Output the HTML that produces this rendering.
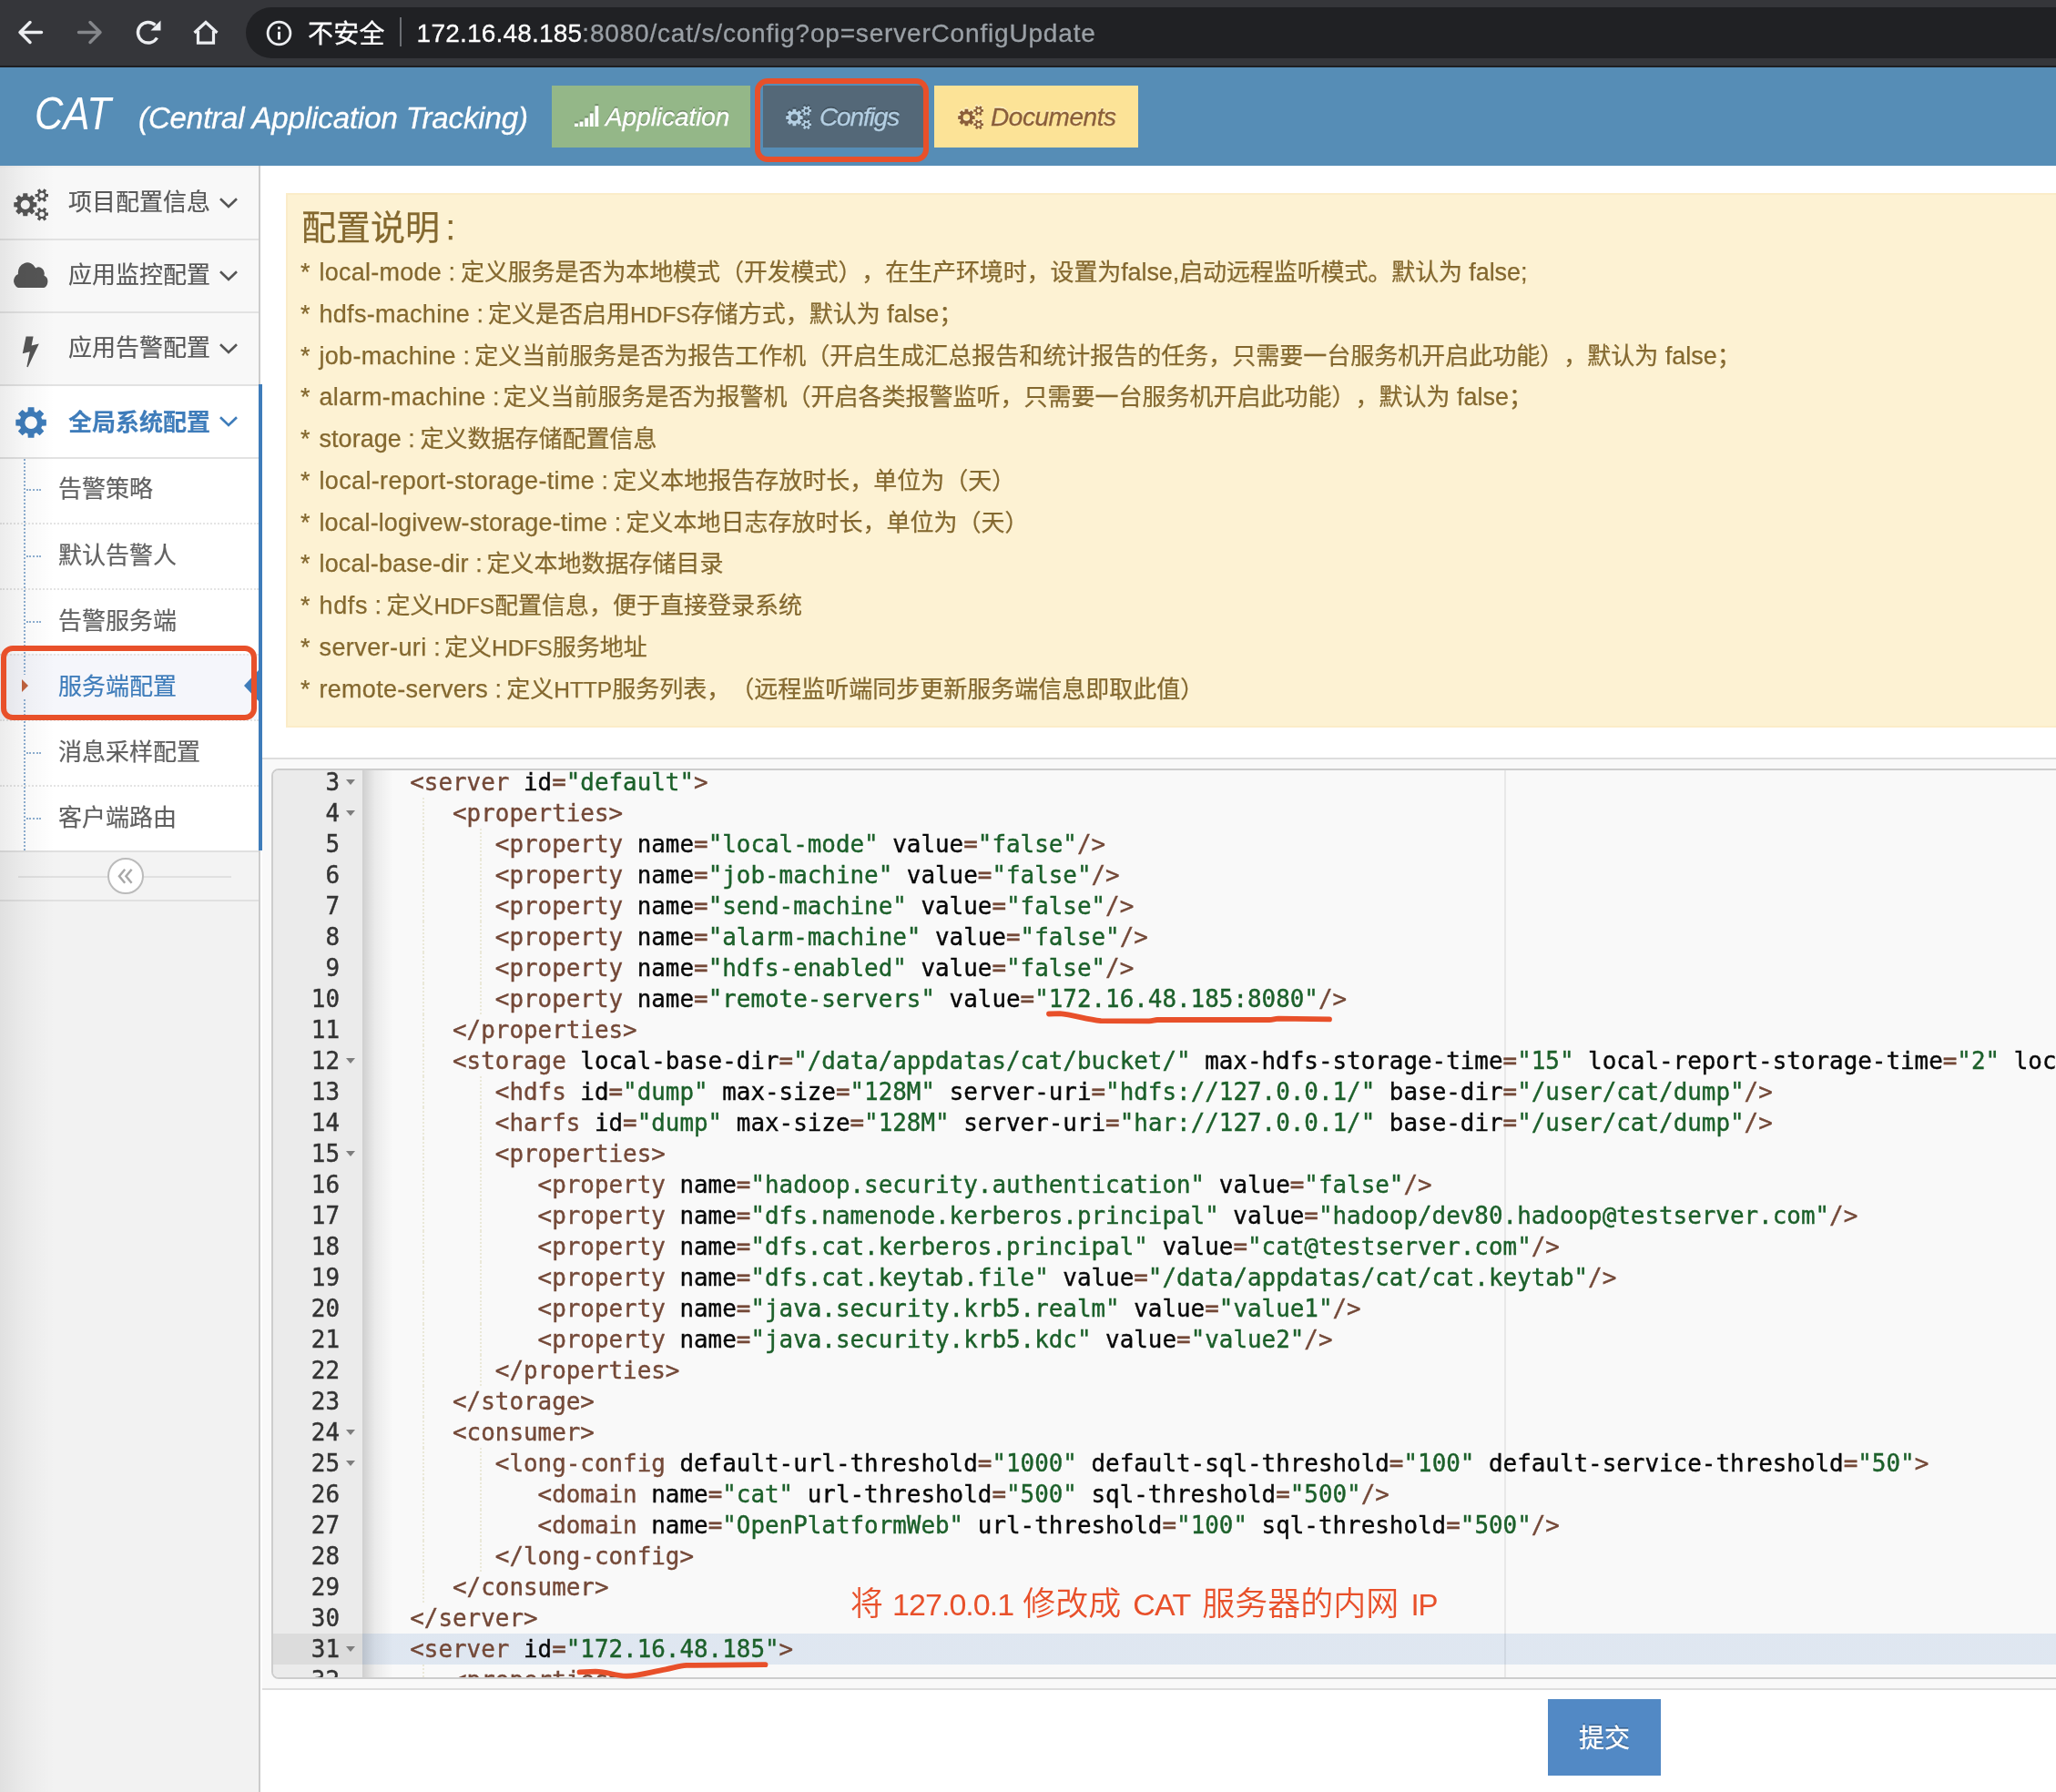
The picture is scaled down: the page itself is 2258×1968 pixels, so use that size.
<!DOCTYPE html>
<html lang="zh-CN">
<head>
<meta charset="utf-8">
<title>CAT - serverConfigUpdate</title>
<style>
*{box-sizing:border-box;margin:0;padding:0}
html,body{width:2258px;height:1968px;overflow:hidden;background:#fff}
body{position:relative;will-change:transform;font-family:"Liberation Sans","Noto Sans CJK SC",sans-serif;color:#393939}
.abs{position:absolute}
/* ---------- browser chrome ---------- */
#chrome{position:absolute;left:0;top:0;width:2258px;height:74px;background:#35363a;border-bottom:2px solid #1e1f22}
#pill{position:absolute;left:270px;top:8px;width:2100px;height:56px;border-radius:28px;background:#202124}
#chrome svg{position:absolute}
#url{position:absolute;left:338px;top:8.7px;height:56px;line-height:56px;font-size:28px;color:#9aa0a6;white-space:nowrap;letter-spacing:0.2px;-webkit-text-stroke:0.3px}
#url b{font-weight:normal;color:#fff}
#url b.c{position:relative;top:1.5px}
#url u{text-decoration:none;letter-spacing:0.82px}
#url .sep{display:inline-block;width:2px;height:32px;background:#6b6e73;vertical-align:-5px;margin:0 17px 0 16px}
/* ---------- app header ---------- */
#hdr{position:absolute;left:0;top:74px;width:2258px;height:108px;background:#568db6}
#hdr .t1{position:absolute;left:37.5px;top:20.8px;font-size:50px;transform:scaleX(0.87);transform-origin:0 0;font-style:italic;color:#fff;line-height:60px;white-space:nowrap}
#hdr .t2{position:absolute;left:152px;top:36px;font-size:33px;letter-spacing:-0.1px;-webkit-text-stroke:0.3px;font-style:italic;color:#fff;line-height:40px;white-space:nowrap}
.nb{position:absolute;top:20px;height:68px;line-height:70px;font-size:28px;font-style:italic;white-space:nowrap;text-align:center}
/* ---------- sidebar ---------- */
#side{position:absolute;left:0;top:182px;width:286px;height:1786px;background:#f2f2f2;border-right:2px solid #ccc}
.mi{position:absolute;left:0;width:284px;height:80px;background:#f8f8f8;border-bottom:2px solid #e2e2e2;border-top:2px solid #f8f8f8}
.mi span{-webkit-text-stroke:0.2px;position:absolute;left:75px;top:0;line-height:72px;font-size:26px;color:#585858;white-space:nowrap}
.mi svg{position:absolute}
.sm{position:absolute;left:0;width:284px;height:72px;background:#fff}
.sm span{-webkit-text-stroke:0.2px;position:absolute;left:64px;top:0;line-height:68px;font-size:26px;color:#616161;white-space:nowrap}

.redbox{position:absolute;border:5px solid #e8502a;border-radius:11px}
.nb svg{position:absolute;filter:drop-shadow(0 -2px 0 rgba(0,0,0,0.22))}
.nb span{position:absolute;top:0;-webkit-text-stroke:0.3px;text-shadow:0 -2px 0 rgba(0,0,0,0.22)}
.nb.y span{text-shadow:0 -2px 0 rgba(255,255,255,0.4)}
.nb.y svg{filter:drop-shadow(0 -2px 0 rgba(255,255,255,0.4))}
.mi.act{background:#fff;border-top-color:#fff}
.mi.act span{color:#3e7cba;font-weight:bold;top:2px}
#sub{z-index:0;position:absolute;left:0;top:322px;width:284px;height:430px;background:#fff}
#sub .vline{z-index:3;position:absolute;left:26px;top:0;width:0;height:430px;border-left:2px dotted #8fb0d2}
.sm{border-top:2px dotted #e4e4e4}
.sm.first{border-top:none}
.sm.first span{line-height:67px}
.sm.first em{top:33px}
.sm em{position:absolute;left:29px;top:34px;width:16px;height:0;border-top:2px dotted #8fb0d2}
.sm.on{background:#f5f6fb}
.sm.on span{color:#3e7cba}
.sm .tri{position:absolute;z-index:4;left:20px;top:21px;width:14px;height:26px;background:#f5f6fb}
.sm .tri::after{content:'';position:absolute;left:4px;top:5px;width:0;height:0;border-left:7.6px solid #c2633f;border-top:7px solid transparent;border-bottom:7px solid transparent}
.sm .arr{position:absolute;left:268px;top:15.5px;width:0;height:0;border-right:16px solid #3e7cba;border-top:17px solid transparent;border-bottom:17px solid transparent}
#bluebar{position:absolute;left:284px;top:240px;width:4px;height:512px;background:#3e7cba}
#coll{position:absolute;left:0;top:752px;width:284px;height:56px;background:#f3f3f3;border-top:2px solid #e0e0e0;border-bottom:2px solid #e0e0e0}
#coll .hl{position:absolute;left:20px;top:26px;width:234px;height:2px;background:#e0e0e0}
#coll .circ{position:absolute;left:118px;top:6px;width:40px;height:40px;border-radius:50%;background:#fff;border:2px solid #bbb}
#coll .circ svg{position:absolute;left:7px;top:8px}
#shade{position:absolute;left:0;top:0;width:60px;height:1786px;background:linear-gradient(90deg,rgba(0,0,0,0.075),rgba(0,0,0,0.03) 45%,rgba(0,0,0,0))}
/* ---------- main ---------- */
#alert{position:absolute;left:314px;top:212px;width:2000px;height:587px;background:#fdf2d3;border:2px solid #fbecc8;color:#84682f;text-spacing-trim:space-all;-webkit-text-stroke:0.25px}
#alert h4{position:absolute;left:15px;top:10px;font-size:38px;line-height:52px;font-weight:normal;white-space:nowrap}
#alert h4 l{font-size:38px;margin-left:6.5px}
#alert p{position:absolute;left:14px;font-size:26px;line-height:46px;white-space:nowrap}
#alert l{font-size:27px}
#alert l.u{font-size:24.5px}
#alert .k{display:inline-block;font-size:27px;white-space:nowrap}
#alert .k i{font-style:normal;display:inline-block;width:20.5px}
#alert .k b{font-weight:normal}
#alert .k u{text-decoration:none;margin-left:7.5px}
/* ---------- editor ---------- */
#ed{position:absolute;left:298px;top:844px;width:2000px;height:1000px;background:#f9f9f9;border:2px solid #cdcdcd;border-radius:8px 0 0 8px;overflow:hidden;font-family:"DejaVu Sans Mono","Liberation Mono",monospace;font-size:25.9px}
#gut{position:absolute;left:0;top:0;width:98px;height:100%;background:#ebebeb}
#gsh{position:absolute;left:98px;top:0;width:34px;height:100%;background:linear-gradient(90deg,rgba(0,0,0,0.17),rgba(0,0,0,0.06) 40%,rgba(0,0,0,0))}
#pm{position:absolute;left:1352px;top:0;width:2px;height:100%;background:#e8e8e8}
.ln{position:absolute;left:0;width:2000px;height:34px;line-height:34px;white-space:pre;-webkit-text-stroke:0.4px}
.ln.cur{background:linear-gradient(90deg,#dcdcdc 98px,rgba(36,99,180,0.12) 98px)}
.ln i{position:absolute;left:0;width:73px;text-align:right;font-style:normal;color:#333}
.ln q{position:absolute;left:79.5px;top:14px;width:0;height:0;border-top:6px solid #7d7d7d;border-left:5.5px solid transparent;border-right:5.5px solid transparent;quotes:none}
.ln s{position:absolute;top:0;width:0;height:34px;border-left:2px dotted #eae8d8;text-decoration:none}
.ln code{position:absolute;left:103.5px;font-family:inherit;font-size:inherit;color:#080808}
.t{color:#744938}.s{color:#1c602a}
#tbl{position:absolute;left:288px;top:832px;width:2000px;height:1024px;background:#f9f9f9;border-top:2px solid #ddd;border-bottom:2px solid #ddd}
#note l{font-size:32px}
#note{position:absolute;left:934px;top:1737px;font-size:36px;line-height:50px;color:#e8502a;white-space:nowrap;font-weight:350}
#submit{position:absolute;left:1700px;top:1866px;width:124px;height:84px;background:#5289c5;color:#fff;font-size:28px;line-height:87.5px;text-align:center;text-shadow:0 -2px 0 rgba(0,0,0,0.25);-webkit-text-stroke:0.3px}
</style>
</head>
<body>
<div id="chrome"><div id="pill"></div>
<svg style="left:18px;top:20px" width="32" height="32" viewBox="0 0 32 32" fill="none" stroke="#eceef1" stroke-width="3.5" stroke-linecap="round" stroke-linejoin="round"><path d="M27.5 15.5H4.5M15 4.5L4 15.5L15 26.5"/></svg>
<svg style="left:82px;top:20px" width="32" height="32" viewBox="0 0 32 32" fill="none" stroke="#85878b" stroke-width="3.5" stroke-linecap="round" stroke-linejoin="round"><path d="M4.5 15.5H27.5M17 4.5L28 15.5L17 26.5"/></svg>
<svg style="left:146px;top:20px" width="34" height="32" viewBox="0 0 34 32" fill="none" stroke="#eceef1" stroke-width="3.4" stroke-linecap="butt"><path d="M26.5 21.5A11.3 11.3 0 1 1 24.5 7.5"/><path d="M30.5 2.5V13.5H19.5Z" fill="#eceef1" stroke="none"/></svg>
<svg style="left:210px;top:20px" width="32" height="32" viewBox="0 0 32 32" fill="none" stroke="#eceef1" stroke-width="3.2" stroke-linejoin="miter"><path d="M3.5 16L16 4.5L28.5 16M7.5 14V27.2H24.5V14"/></svg>
<svg style="left:291px;top:21px" width="31" height="31" viewBox="0 0 31 31" fill="none" stroke="#eceef1" stroke-width="2.8"><circle cx="15.5" cy="15.5" r="12.4"/><path d="M15.5 13.8V22.5" stroke-width="3"/><path d="M15.5 8.3V11.3" stroke-width="3"/></svg>
<div id="url"><b class="c">不安全</b><span class="sep"></span><b>172.16.48.185</b><u>:8080/cat/s/config?op=serverConfigUpdate</u></div>
</div>
<div id="hdr">
<div class="t1">CAT</div><div class="t2">(Central Application Tracking)</div>
<div class="nb" style="left:606px;width:218px;background:#94b788;color:#fff"><svg style="left:24.9px;top:22.3px" width="27" height="23" viewBox="0 0 27 23" fill="#fff"><rect x="0" y="19.5" width="3.9" height="3.5"/><rect x="5.6" y="17.5" width="3.9" height="5.5"/><rect x="11.2" y="13.5" width="3.9" height="9.5"/><rect x="16.8" y="8.4" width="3.9" height="14.6"/><rect x="22.4" y="0.2" width="3.9" height="22.8"/></svg><span style="left:59px;letter-spacing:-0.06px">Application</span></div>
<div class="nb" style="left:838px;width:176px;background:#546878;color:#b4cfe3"><svg style="left:25px;top:22px" width="28.4" height="26.3" viewBox="0 0 38.6 35.8"><path fill="#b4cfe3" fill-rule="evenodd" d="M21.81 15.11L25.35 15.30L25.35 20.30L21.81 20.49L21.07 22.26L23.44 24.91L19.91 28.44L17.26 26.07L15.49 26.81L15.30 30.35L10.30 30.35L10.11 26.81L8.34 26.07L5.69 28.44L2.16 24.91L4.53 22.26L3.79 20.49L0.25 20.30L0.25 15.30L3.79 15.11L4.53 13.34L2.16 10.69L5.69 7.16L8.34 9.53L10.11 8.79L10.30 5.25L15.30 5.25L15.49 8.79L17.26 9.53L19.91 7.16L23.44 10.69L21.07 13.34ZM17.90 17.80A5.10 5.10 0 1 0 7.70 17.80A5.10 5.10 0 1 0 17.90 17.80ZM35.70 5.91L38.42 5.94L38.42 9.26L35.70 9.29L34.82 10.83L36.14 13.19L33.27 14.85L31.89 12.52L30.11 12.52L28.73 14.85L25.86 13.19L27.18 10.83L26.30 9.29L23.58 9.26L23.58 5.94L26.30 5.91L27.18 4.37L25.86 2.01L28.73 0.35L30.11 2.68L31.89 2.68L33.27 0.35L36.14 2.01L34.82 4.37ZM33.80 7.60A2.80 2.80 0 1 0 28.20 7.60A2.80 2.80 0 1 0 33.80 7.60ZM35.70 26.51L38.42 26.54L38.42 29.86L35.70 29.89L34.82 31.43L36.14 33.79L33.27 35.45L31.89 33.12L30.11 33.12L28.73 35.45L25.86 33.79L27.18 31.43L26.30 29.89L23.58 29.86L23.58 26.54L26.30 26.51L27.18 24.97L25.86 22.61L28.73 20.95L30.11 23.28L31.89 23.28L33.27 20.95L36.14 22.61L34.82 24.97ZM33.80 28.20A2.80 2.80 0 1 0 28.20 28.20A2.80 2.80 0 1 0 33.80 28.20Z"/></svg><span style="left:62px;letter-spacing:-1.1px">Configs</span></div>
<div class="nb y" style="left:1026px;width:224px;background:#fce397;color:#8a5e3a"><svg style="left:25.5px;top:22px" width="28.4" height="26.3" viewBox="0 0 38.6 35.8"><path fill="#8a5e3a" fill-rule="evenodd" d="M21.81 15.11L25.35 15.30L25.35 20.30L21.81 20.49L21.07 22.26L23.44 24.91L19.91 28.44L17.26 26.07L15.49 26.81L15.30 30.35L10.30 30.35L10.11 26.81L8.34 26.07L5.69 28.44L2.16 24.91L4.53 22.26L3.79 20.49L0.25 20.30L0.25 15.30L3.79 15.11L4.53 13.34L2.16 10.69L5.69 7.16L8.34 9.53L10.11 8.79L10.30 5.25L15.30 5.25L15.49 8.79L17.26 9.53L19.91 7.16L23.44 10.69L21.07 13.34ZM17.90 17.80A5.10 5.10 0 1 0 7.70 17.80A5.10 5.10 0 1 0 17.90 17.80ZM35.70 5.91L38.42 5.94L38.42 9.26L35.70 9.29L34.82 10.83L36.14 13.19L33.27 14.85L31.89 12.52L30.11 12.52L28.73 14.85L25.86 13.19L27.18 10.83L26.30 9.29L23.58 9.26L23.58 5.94L26.30 5.91L27.18 4.37L25.86 2.01L28.73 0.35L30.11 2.68L31.89 2.68L33.27 0.35L36.14 2.01L34.82 4.37ZM33.80 7.60A2.80 2.80 0 1 0 28.20 7.60A2.80 2.80 0 1 0 33.80 7.60ZM35.70 26.51L38.42 26.54L38.42 29.86L35.70 29.89L34.82 31.43L36.14 33.79L33.27 35.45L31.89 33.12L30.11 33.12L28.73 35.45L25.86 33.79L27.18 31.43L26.30 29.89L23.58 29.86L23.58 26.54L26.30 26.51L27.18 24.97L25.86 22.61L28.73 20.95L30.11 23.28L31.89 23.28L33.27 20.95L36.14 22.61L34.82 24.97ZM33.80 28.20A2.80 2.80 0 1 0 28.20 28.20A2.80 2.80 0 1 0 33.80 28.20Z"/></svg><span style="left:62px;letter-spacing:-0.45px">Documents</span></div>
<div class="redbox" style="left:828.5px;top:11.5px;width:191px;height:92px;border-width:6px;border-radius:14px"></div>
</div>
<div id="side">
<div class="mi" style="top:2px"><svg class="ic" style="left:14.6px;top:21.4px" width="38.6" height="35.8" viewBox="0 0 38.6 35.8"><path fill="#555" fill-rule="evenodd" d="M21.81 15.11L25.35 15.30L25.35 20.30L21.81 20.49L21.07 22.26L23.44 24.91L19.91 28.44L17.26 26.07L15.49 26.81L15.30 30.35L10.30 30.35L10.11 26.81L8.34 26.07L5.69 28.44L2.16 24.91L4.53 22.26L3.79 20.49L0.25 20.30L0.25 15.30L3.79 15.11L4.53 13.34L2.16 10.69L5.69 7.16L8.34 9.53L10.11 8.79L10.30 5.25L15.30 5.25L15.49 8.79L17.26 9.53L19.91 7.16L23.44 10.69L21.07 13.34ZM17.90 17.80A5.10 5.10 0 1 0 7.70 17.80A5.10 5.10 0 1 0 17.90 17.80ZM35.70 5.91L38.42 5.94L38.42 9.26L35.70 9.29L34.82 10.83L36.14 13.19L33.27 14.85L31.89 12.52L30.11 12.52L28.73 14.85L25.86 13.19L27.18 10.83L26.30 9.29L23.58 9.26L23.58 5.94L26.30 5.91L27.18 4.37L25.86 2.01L28.73 0.35L30.11 2.68L31.89 2.68L33.27 0.35L36.14 2.01L34.82 4.37ZM33.80 7.60A2.80 2.80 0 1 0 28.20 7.60A2.80 2.80 0 1 0 33.80 7.60ZM35.70 26.51L38.42 26.54L38.42 29.86L35.70 29.89L34.82 31.43L36.14 33.79L33.27 35.45L31.89 33.12L30.11 33.12L28.73 35.45L25.86 33.79L27.18 31.43L26.30 29.89L23.58 29.86L23.58 26.54L26.30 26.51L27.18 24.97L25.86 22.61L28.73 20.95L30.11 23.28L31.89 23.28L33.27 20.95L36.14 22.61L34.82 24.97ZM33.80 28.20A2.80 2.80 0 1 0 28.20 28.20A2.80 2.80 0 1 0 33.80 28.20Z"/></svg><span>项目配置信息</span><svg style="left:241px;top:30.5px" width="20" height="12" viewBox="0 0 20 12" fill="none" stroke="#555" stroke-width="2.6"><path d="M1 1.2L10 10L19 1.2"/></svg></div>
<div class="mi" style="top:82px"><svg style="left:14.5px;top:21.6px" width="39" height="28.6" viewBox="0 0 39 26.6" preserveAspectRatio="none"><path fill="#555" d="M7.2 26.4A7.3 7.3 0 0 1 5.0 12.2A10.2 10.2 0 0 1 24.2 6.0A6.3 6.3 0 0 1 33.4 13.4A6.9 6.9 0 0 1 32.0 26.4Z"/></svg><span>应用监控配置</span><svg style="left:241px;top:30.5px" width="20" height="12" viewBox="0 0 20 12" fill="none" stroke="#555" stroke-width="2.6"><path d="M1 1.2L10 10L19 1.2"/></svg></div>
<div class="mi" style="top:162px"><svg style="left:24px;top:23.3px" width="20" height="35" viewBox="0 0 20 35"><path fill="#555" d="M4.6 0.6H12.6L10.6 10.4L18.8 8.6L6.6 34.2L5.4 33.8L8.8 17.2L0.8 19.2Z"/></svg><span>应用告警配置</span><svg style="left:241px;top:30.5px" width="20" height="12" viewBox="0 0 20 12" fill="none" stroke="#555" stroke-width="2.6"><path d="M1 1.2L10 10L19 1.2"/></svg></div>
<div class="mi act" style="top:242px"><svg style="left:16.8px;top:20.8px" width="34.2" height="34.2" viewBox="0 0 34.2 34.2"><path fill="#3e7cba" fill-rule="evenodd" d="M29.17 13.49L33.87 13.76L33.87 20.44L29.17 20.71L28.19 23.08L31.32 26.60L26.60 31.32L23.08 28.19L20.71 29.17L20.44 33.87L13.76 33.87L13.49 29.17L11.12 28.19L7.60 31.32L2.88 26.60L6.01 23.08L5.03 20.71L0.33 20.44L0.33 13.76L5.03 13.49L6.01 11.12L2.88 7.60L7.60 2.88L11.12 6.01L13.49 5.03L13.76 0.33L20.44 0.33L20.71 5.03L23.08 6.01L26.60 2.88L31.32 7.60L28.19 11.12ZM23.90 17.10A6.80 6.80 0 1 0 10.30 17.10A6.80 6.80 0 1 0 23.90 17.10Z"/></svg><span>全局系统配置</span><svg style="left:241px;top:30.5px" width="20" height="12" viewBox="0 0 20 12" fill="none" stroke="#3e7cba" stroke-width="2.6"><path d="M1 1.2L10 10L19 1.2"/></svg></div>
<div id="sub">
<div class="vline"></div>
<div class="sm first" style="top:0;height:70px"><em></em><span>告警策略</span></div>
<div class="sm" style="top:70px"><em></em><span>默认告警人</span></div>
<div class="sm" style="top:142px"><em></em><span>告警服务端</span></div>
<div class="sm on" style="top:214px"><b class="tri"></b><span>服务端配置</span><b class="arr"></b></div>
<div class="sm" style="top:286px"><em></em><span>消息采样配置</span></div>
<div class="sm" style="top:358px"><em></em><span>客户端路由</span></div>
</div>
<div id="bluebar"></div>
<div id="coll"><div class="hl"></div><div class="circ"><svg width="22" height="20" viewBox="0 0 22 20" fill="none" stroke="#a8a8a8" stroke-width="2.5"><path d="M10.2 2.8L4 10.3L10.2 17.8M17.6 2.8L11.4 10.3L17.6 17.8"/></svg></div></div>
<div id="shade"></div>
<div class="redbox" style="left:1.2px;top:527px;width:280.5px;height:81.5px;border-width:6px;border-radius:13px"></div>
</div>
<div id="alert">
<h4>配置说明<l>:</l></h4>
<p style="top:62.0px;letter-spacing:-0.1px"><span class="k" style="width:176.0px"><i>*</i><b style="letter-spacing:0.24px">local-mode</b><u>:</u></span>定义服务是否为本地模式（开发模式），在生产环境时，设置为<l>false,</l>启动远程监听模式。默认为<l> false;</l></p>
<p style="top:107.8px"><span class="k" style="width:206.0px"><i>*</i><b style="letter-spacing:0.29px">hdfs-machine</b><u>:</u></span>定义是否启用<l class='u'>HDFS</l>存储方式，默认为<l> false</l>；</p>
<p style="top:153.5px"><span class="k" style="width:191.3px"><i>*</i><b style="letter-spacing:0.30px">job-machine</b><u>:</u></span>定义当前服务是否为报告工作机（开启生成汇总报告和统计报告的任务，只需要一台服务机开启此功能），默认为<l> false</l>；</p>
<p style="top:199.3px"><span class="k" style="width:222.4px"><i>*</i><b style="letter-spacing:0.35px">alarm-machine</b><u>:</u></span>定义当前服务是否为报警机（开启各类报警监听，只需要一台服务机开启此功能），默认为<l> false</l>；</p>
<p style="top:245.0px"><span class="k" style="width:131.4px"><i>*</i><b style="letter-spacing:0.04px">storage</b><u>:</u></span>定义数据存储配置信息</p>
<p style="top:290.8px"><span class="k" style="width:343.3px"><i>*</i><b style="letter-spacing:0.34px">local-report-storage-time</b><u>:</u></span>定义本地报告存放时长，单位为（天）</p>
<p style="top:336.6px"><span class="k" style="width:357.5px"><i>*</i><b style="letter-spacing:0.12px">local-logivew-storage-time</b><u>:</u></span>定义本地日志存放时长，单位为（天）</p>
<p style="top:382.3px"><span class="k" style="width:204.4px"><i>*</i><b style="letter-spacing:0.15px">local-base-dir</b><u>:</u></span>定义本地数据存储目录</p>
<p style="top:428.1px"><span class="k" style="width:94.4px"><i>*</i><b style="letter-spacing:0.63px">hdfs</b><u>:</u></span>定义<l class='u'>HDFS</l>配置信息，便于直接登录系统</p>
<p style="top:473.8px"><span class="k" style="width:158.0px"><i>*</i><b style="letter-spacing:0.41px">server-uri</b><u>:</u></span>定义<l class='u'>HDFS</l>服务地址</p>
<p style="top:519.6px"><span class="k" style="width:226.2px"><i>*</i><b style="letter-spacing:0.29px">remote-servers</b><u>:</u></span>定义<l class='u'>HTTP</l>服务列表，（远程监听端同步更新服务端信息即取此值）</p>
</div>
<div id="tbl"></div>
<div id="ed"><div id="gut"></div><div id="gsh"></div><div id="pm"></div>
<div class="ln" style="top:-4px"><i>3</i><q></q><code>   <span class="t">&lt;server</span> id<span class="t">=</span><span class="s">&quot;default&quot;</span><span class="t">&gt;</span></code></div>
<div class="ln" style="top:30px"><i>4</i><q></q><s style="left:164.4px"></s><code>      <span class="t">&lt;properties</span><span class="t">&gt;</span></code></div>
<div class="ln" style="top:64px"><i>5</i><s style="left:164.4px"></s><s style="left:226.8px"></s><code>         <span class="t">&lt;property</span> name<span class="t">=</span><span class="s">&quot;local-mode&quot;</span> value<span class="t">=</span><span class="s">&quot;false&quot;</span><span class="t">/&gt;</span></code></div>
<div class="ln" style="top:98px"><i>6</i><s style="left:164.4px"></s><s style="left:226.8px"></s><code>         <span class="t">&lt;property</span> name<span class="t">=</span><span class="s">&quot;job-machine&quot;</span> value<span class="t">=</span><span class="s">&quot;false&quot;</span><span class="t">/&gt;</span></code></div>
<div class="ln" style="top:132px"><i>7</i><s style="left:164.4px"></s><s style="left:226.8px"></s><code>         <span class="t">&lt;property</span> name<span class="t">=</span><span class="s">&quot;send-machine&quot;</span> value<span class="t">=</span><span class="s">&quot;false&quot;</span><span class="t">/&gt;</span></code></div>
<div class="ln" style="top:166px"><i>8</i><s style="left:164.4px"></s><s style="left:226.8px"></s><code>         <span class="t">&lt;property</span> name<span class="t">=</span><span class="s">&quot;alarm-machine&quot;</span> value<span class="t">=</span><span class="s">&quot;false&quot;</span><span class="t">/&gt;</span></code></div>
<div class="ln" style="top:200px"><i>9</i><s style="left:164.4px"></s><s style="left:226.8px"></s><code>         <span class="t">&lt;property</span> name<span class="t">=</span><span class="s">&quot;hdfs-enabled&quot;</span> value<span class="t">=</span><span class="s">&quot;false&quot;</span><span class="t">/&gt;</span></code></div>
<div class="ln" style="top:234px"><i>10</i><s style="left:164.4px"></s><s style="left:226.8px"></s><code>         <span class="t">&lt;property</span> name<span class="t">=</span><span class="s">&quot;remote-servers&quot;</span> value<span class="t">=</span><span class="s">&quot;172.16.48.185:8080&quot;</span><span class="t">/&gt;</span></code></div>
<div class="ln" style="top:268px"><i>11</i><s style="left:164.4px"></s><code>      <span class="t">&lt;/properties</span><span class="t">&gt;</span></code></div>
<div class="ln" style="top:302px"><i>12</i><q></q><s style="left:164.4px"></s><code>      <span class="t">&lt;storage</span> local-base-dir<span class="t">=</span><span class="s">&quot;/data/appdatas/cat/bucket/&quot;</span> max-hdfs-storage-time<span class="t">=</span><span class="s">&quot;15&quot;</span> local-report-storage-time<span class="t">=</span><span class="s">&quot;2&quot;</span> local-logivew-storage-time<span class="t">=</span><span class="s">&quot;7&quot;</span> har-mode<span class="t">=</span><span class="s">&quot;true&quot;</span> upload-thread<span class="t">=</span><span class="s">&quot;5&quot;</span><span class="t">&gt;</span></code></div>
<div class="ln" style="top:336px"><i>13</i><s style="left:164.4px"></s><s style="left:226.8px"></s><code>         <span class="t">&lt;hdfs</span> id<span class="t">=</span><span class="s">&quot;dump&quot;</span> max-size<span class="t">=</span><span class="s">&quot;128M&quot;</span> server-uri<span class="t">=</span><span class="s">&quot;hdfs://127.0.0.1/&quot;</span> base-dir<span class="t">=</span><span class="s">&quot;/user/cat/dump&quot;</span><span class="t">/&gt;</span></code></div>
<div class="ln" style="top:370px"><i>14</i><s style="left:164.4px"></s><s style="left:226.8px"></s><code>         <span class="t">&lt;harfs</span> id<span class="t">=</span><span class="s">&quot;dump&quot;</span> max-size<span class="t">=</span><span class="s">&quot;128M&quot;</span> server-uri<span class="t">=</span><span class="s">&quot;har://127.0.0.1/&quot;</span> base-dir<span class="t">=</span><span class="s">&quot;/user/cat/dump&quot;</span><span class="t">/&gt;</span></code></div>
<div class="ln" style="top:404px"><i>15</i><q></q><s style="left:164.4px"></s><s style="left:226.8px"></s><code>         <span class="t">&lt;properties</span><span class="t">&gt;</span></code></div>
<div class="ln" style="top:438px"><i>16</i><s style="left:164.4px"></s><s style="left:226.8px"></s><code>            <span class="t">&lt;property</span> name<span class="t">=</span><span class="s">&quot;hadoop.security.authentication&quot;</span> value<span class="t">=</span><span class="s">&quot;false&quot;</span><span class="t">/&gt;</span></code></div>
<div class="ln" style="top:472px"><i>17</i><s style="left:164.4px"></s><s style="left:226.8px"></s><code>            <span class="t">&lt;property</span> name<span class="t">=</span><span class="s">&quot;dfs.namenode.kerberos.principal&quot;</span> value<span class="t">=</span><span class="s">&quot;hadoop/dev80.hadoop@testserver.com&quot;</span><span class="t">/&gt;</span></code></div>
<div class="ln" style="top:506px"><i>18</i><s style="left:164.4px"></s><s style="left:226.8px"></s><code>            <span class="t">&lt;property</span> name<span class="t">=</span><span class="s">&quot;dfs.cat.kerberos.principal&quot;</span> value<span class="t">=</span><span class="s">&quot;cat@testserver.com&quot;</span><span class="t">/&gt;</span></code></div>
<div class="ln" style="top:540px"><i>19</i><s style="left:164.4px"></s><s style="left:226.8px"></s><code>            <span class="t">&lt;property</span> name<span class="t">=</span><span class="s">&quot;dfs.cat.keytab.file&quot;</span> value<span class="t">=</span><span class="s">&quot;/data/appdatas/cat/cat.keytab&quot;</span><span class="t">/&gt;</span></code></div>
<div class="ln" style="top:574px"><i>20</i><s style="left:164.4px"></s><s style="left:226.8px"></s><code>            <span class="t">&lt;property</span> name<span class="t">=</span><span class="s">&quot;java.security.krb5.realm&quot;</span> value<span class="t">=</span><span class="s">&quot;value1&quot;</span><span class="t">/&gt;</span></code></div>
<div class="ln" style="top:608px"><i>21</i><s style="left:164.4px"></s><s style="left:226.8px"></s><code>            <span class="t">&lt;property</span> name<span class="t">=</span><span class="s">&quot;java.security.krb5.kdc&quot;</span> value<span class="t">=</span><span class="s">&quot;value2&quot;</span><span class="t">/&gt;</span></code></div>
<div class="ln" style="top:642px"><i>22</i><s style="left:164.4px"></s><s style="left:226.8px"></s><code>         <span class="t">&lt;/properties</span><span class="t">&gt;</span></code></div>
<div class="ln" style="top:676px"><i>23</i><s style="left:164.4px"></s><code>      <span class="t">&lt;/storage</span><span class="t">&gt;</span></code></div>
<div class="ln" style="top:710px"><i>24</i><q></q><s style="left:164.4px"></s><code>      <span class="t">&lt;consumer</span><span class="t">&gt;</span></code></div>
<div class="ln" style="top:744px"><i>25</i><q></q><s style="left:164.4px"></s><s style="left:226.8px"></s><code>         <span class="t">&lt;long-config</span> default-url-threshold<span class="t">=</span><span class="s">&quot;1000&quot;</span> default-sql-threshold<span class="t">=</span><span class="s">&quot;100&quot;</span> default-service-threshold<span class="t">=</span><span class="s">&quot;50&quot;</span><span class="t">&gt;</span></code></div>
<div class="ln" style="top:778px"><i>26</i><s style="left:164.4px"></s><s style="left:226.8px"></s><code>            <span class="t">&lt;domain</span> name<span class="t">=</span><span class="s">&quot;cat&quot;</span> url-threshold<span class="t">=</span><span class="s">&quot;500&quot;</span> sql-threshold<span class="t">=</span><span class="s">&quot;500&quot;</span><span class="t">/&gt;</span></code></div>
<div class="ln" style="top:812px"><i>27</i><s style="left:164.4px"></s><s style="left:226.8px"></s><code>            <span class="t">&lt;domain</span> name<span class="t">=</span><span class="s">&quot;OpenPlatformWeb&quot;</span> url-threshold<span class="t">=</span><span class="s">&quot;100&quot;</span> sql-threshold<span class="t">=</span><span class="s">&quot;500&quot;</span><span class="t">/&gt;</span></code></div>
<div class="ln" style="top:846px"><i>28</i><s style="left:164.4px"></s><s style="left:226.8px"></s><code>         <span class="t">&lt;/long-config</span><span class="t">&gt;</span></code></div>
<div class="ln" style="top:880px"><i>29</i><s style="left:164.4px"></s><code>      <span class="t">&lt;/consumer</span><span class="t">&gt;</span></code></div>
<div class="ln" style="top:914px"><i>30</i><code>   <span class="t">&lt;/server</span><span class="t">&gt;</span></code></div>
<div class="ln cur" style="top:948px"><i>31</i><q></q><code>   <span class="t">&lt;server</span> id<span class="t">=</span><span class="s">&quot;172.16.48.185&quot;</span><span class="t">&gt;</span></code></div>
<div class="ln" style="top:982px"><i>32</i><q></q><s style="left:164.4px"></s><code>      <span class="t">&lt;properties</span><span class="t">&gt;</span></code></div>
</div>
<div id="note">将 <l style="font-size:34px;letter-spacing:-0.95px">127.0.0.1</l> 修改成 <l style="font-size:34px;margin:0 3px 0 3px;letter-spacing:-0.8px">CAT</l> 服务器的内网 <l style="font-size:33px;margin-left:3px;letter-spacing:-1px">IP</l></div>
<svg id="scribble" class="abs" style="left:0;top:0" width="2258" height="1968" viewBox="0 0 2258 1968" fill="none" stroke="#e8502a" stroke-width="5.8" stroke-linecap="round" stroke-linejoin="round">
<path d="M1152 1113.5L1164 1113.2C1178 1114.5 1192 1119 1209 1121.2L1262 1121.3C1266 1121 1268 1120.2 1271 1120L1394 1120C1398 1119.8 1400 1118.8 1404 1118.6L1460 1119.4"/>
<path d="M636.5 1836.3L654 1835.7C667 1836 676 1840.4 688 1840.6C700 1840.7 715 1836.2 731 1833.3C740 1831.6 746 1829.5 754 1828.9L840.5 1828.2"/>
</svg>
<div id="submit">提交</div>
</body>
</html>
